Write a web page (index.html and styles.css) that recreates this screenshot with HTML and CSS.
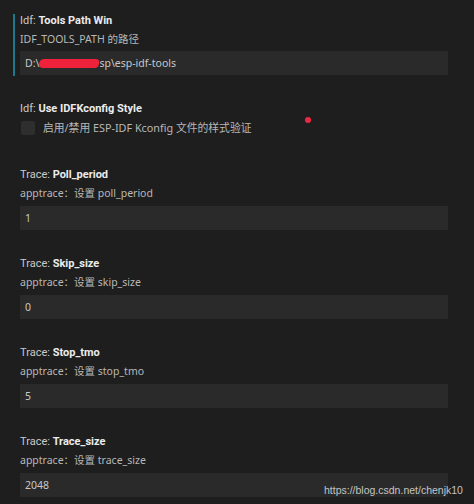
FILE: index.html
```html
<!DOCTYPE html>
<html>
<head>
<meta charset="utf-8">
<link rel="stylesheet" href="styles.css">
</head>
<body>
<div class="page">
  <div class="settings">
    <div class="setting focused">
      <div class="title"><span class="cat">Idf: </span><span class="label">Tools Path Win</span></div>
      <div class="desc">IDF_TOOLS_PATH 的路径</div>
      <div class="input">D:\<span class="redact"></span>sp\esp-idf-tools</div>
    </div>
    <div class="setting bool">
      <div class="title"><span class="cat">Idf: </span><span class="label">Use IDFKconfig Style</span></div>
      <div class="check-row"><span class="checkbox"></span><span class="desc">启用/禁用 ESP-IDF Kconfig 文件的样式验证</span></div>
    </div>
    <div class="setting trace">
      <div class="title"><span class="cat">Trace: </span><span class="label">Poll_period</span></div>
      <div class="desc">apptrace：设置 poll_period</div>
      <div class="input">1</div>
    </div>
    <div class="setting trace">
      <div class="title"><span class="cat">Trace: </span><span class="label">Skip_size</span></div>
      <div class="desc">apptrace：设置 skip_size</div>
      <div class="input">0</div>
    </div>
    <div class="setting trace">
      <div class="title"><span class="cat">Trace: </span><span class="label">Stop_tmo</span></div>
      <div class="desc">apptrace：设置 stop_tmo</div>
      <div class="input">5</div>
    </div>
    <div class="setting trace">
      <div class="title"><span class="cat">Trace: </span><span class="label">Trace_size</span></div>
      <div class="desc">apptrace：设置 trace_size</div>
      <div class="input">2048</div>
    </div>
  </div>
  <span class="dot"></span>
  <span class="watermark">https://blog.csdn.net/chenjk10</span>
</div>
</body>
</html>
```

FILE: styles.css
```css
html, body {
  margin: 0;
  padding: 0;
  background: #1e1e1e;
}
.page {
  position: relative;
  width: 474px;
  height: 504px;
  overflow: hidden;
  background: #1e1e1e;
  font-family: "Noto Sans", "Noto Sans CJK SC", sans-serif;
  font-size: 10.5px;
  color: #cccccc;
}
.settings {
  display: flex;
  flex-direction: column;
  padding-left: 13px;
  width: 435px;
}
.setting {
  position: relative;
  display: flex;
  flex-direction: column;
  padding-left: 5px;
  border-left: 2px solid transparent;
}
.setting.focused {
  margin-top: 12px;
  padding-bottom: 1px;
}
.setting.focused::before {
  content: "";
  position: absolute;
  left: -2px;
  top: 2px;
  bottom: 0;
  width: 2px;
  background: #1c7a8c;
}
.setting.bool {
  margin-top: 24px;
}
.setting.trace {
  margin-top: 29px;
}
.setting.trace + .setting.trace {
  margin-top: 25px;
}
.title {
  height: 18px;
  line-height: 18px;
  white-space: nowrap;
  font-family: Roboto, "Noto Sans", sans-serif;
  font-size: 11px;
}
.cat {
  color: #cacaca;
}
.label {
  font-weight: 700;
  color: #ececec;
}
.desc {
  height: 18px;
  line-height: 18px;
  color: #b8b8b8;
  white-space: nowrap;
}
.input {
  margin-top: 3px;
  height: 24px;
  line-height: 24px;
  background: #2a2a2a;
  padding-left: 5px;
  color: #c8c8c8;
  white-space: nowrap;
  display: flex;
  align-items: center;
}
.trace .input {
  margin-top: 4px;
}
.redact {
  display: inline-block;
  width: 60px;
  height: 9px;
  margin-top: 1px;
  background: #f0213a;
  border-radius: 6px 5px 5px 6px;
  transform: skewX(-8deg);
}
.check-row {
  display: flex;
  align-items: center;
  margin-top: 1px;
  gap: 8px;
  padding-left: 1px;
}
.check-row .desc {
  font-size: 10.8px;
}
.checkbox {
  width: 14px;
  height: 14px;
  background: #2e2e2e;
  border-radius: 2px;
  flex: none;
}
.dot {
  position: absolute;
  left: 305px;
  top: 117px;
  width: 6px;
  height: 6px;
  border-radius: 50%;
  background: #ee2648;
}
.watermark {
  position: absolute;
  left: 324px;
  top: 483px;
  font-family: "Liberation Sans", Arial, sans-serif;
  font-size: 10.5px;
  color: #c4c4c4;
  line-height: 14px;
}
```
